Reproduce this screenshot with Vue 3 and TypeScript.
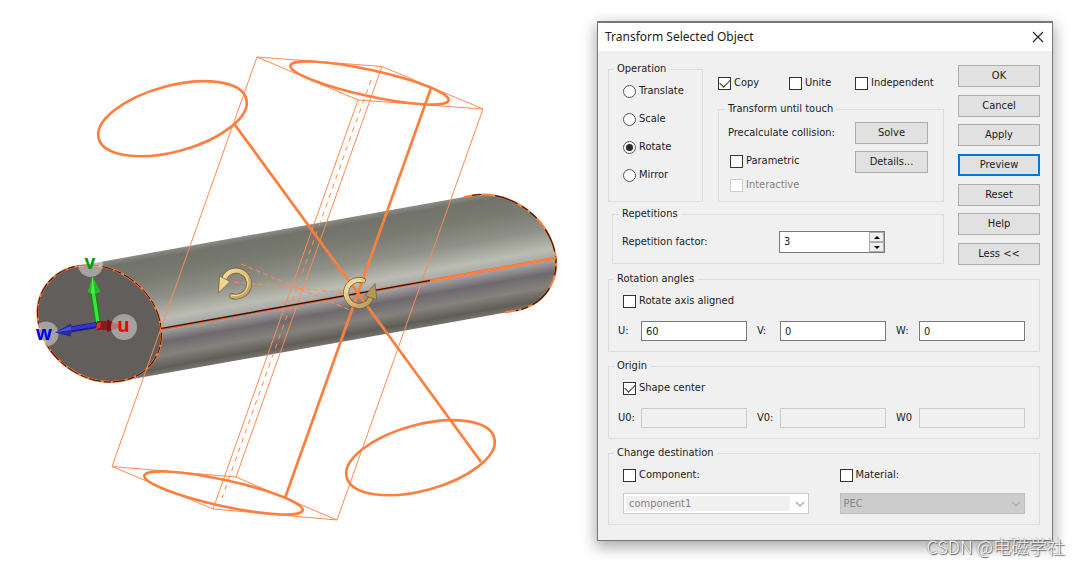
<script setup lang="ts">
import { ref } from 'vue'

const operations = ['Translate', 'Scale', 'Rotate', 'Mirror']
const operation = ref('Rotate')
const actions = ['OK', 'Cancel', 'Apply', 'Preview', 'Reset', 'Help', 'Less <<']
const copy = ref(true)
const unite = ref(false)
const independent = ref(false)
const parametric = ref(false)
const repetitions = ref('3')
const axisAligned = ref(false)
const angles = ref([
  { label: 'U:', value: '60' },
  { label: 'V:', value: '0' },
  { label: 'W:', value: '0' },
])
const origins = ['U0:', 'V0:', 'W0']
const shapeCenter = ref(true)
const useComponent = ref(false)
const useMaterial = ref(false)

function step(delta: number) {
  repetitions.value = String(Math.max(1, Number(repetitions.value) + delta))
}
</script>

<template>
  <main class="page">
    <svg class="scene" viewBox="0 0 597 564" role="img" aria-label="Cylinder with rotation preview">
      <defs>
        <linearGradient id="metal" gradientUnits="userSpaceOnUse" x1="88.9" y1="263.9" x2="110.1" y2="383.1">
          <stop offset="0" stop-color="#8a8b84" />
          <stop offset="0.05" stop-color="#71726a" />
          <stop offset="0.2" stop-color="#797a70" />
          <stop offset="0.38" stop-color="#8f9188" />
          <stop offset="0.55" stop-color="#bbbdb3" />
          <stop offset="0.64" stop-color="#a5a3a5" />
          <stop offset="0.74" stop-color="#6e696c" />
          <stop offset="0.85" stop-color="#85827d" />
          <stop offset="0.95" stop-color="#5f5d56" />
          <stop offset="1" stop-color="#77756f" />
        </linearGradient>
        <linearGradient id="gold" x1="0" y1="0" x2="1" y2="1">
          <stop offset="0" stop-color="#f7e3a4" />
          <stop offset="0.5" stop-color="#d9bc77" />
          <stop offset="1" stop-color="#b5995b" />
        </linearGradient>
      </defs>

      <path d="M77.7 265.9 472.2 195.4A65.7 54.3 36 0 1 515.8 310.6L121.3 381.1Z" fill="url(#metal)" />
      <g fill="none" stroke-width="2">
        <path d="M464 196.900 472.2 195.4A65.7 54.3 36 0 1 515.8 310.6L505 312.500" stroke="#ff7f3f" />
        <path d="M472.2 195.4A65.7 54.3 36 0 1 515.8 310.6" stroke="#2c170d" stroke-width="1.2" stroke-dasharray="9 14 24 5 7 3" />
      </g>
      <ellipse cx="99.5" cy="323.5" rx="65.7" ry="54.3" transform="rotate(36 99.5 323.5)" fill="#625e5c" stroke="#ff7f3f" stroke-width="2" />
      <ellipse cx="99.5" cy="323.5" rx="65.7" ry="54.3" transform="rotate(36 99.5 323.5)" fill="none" stroke="#2c170d" stroke-width="1" stroke-dasharray="7 3 12 2" />

      <g fill="none" stroke="#ff8a52" stroke-width="1">
        <path d="M257 57 382 66.500 483 109 358 100ZM112 466.500 236 477 337 520 213 509ZM257 57 112 466.500M382 66.500 236 477M483 109 337 520M358 100 213 509" />
        <path d="M371 80 222 498" stroke-dasharray="5 5" />
        <path d="M241 264 350 310M234 282 346 293" stroke-dasharray="5 3" />
      </g>

      <path d="M161 329 556 258" stroke="#d9602c" stroke-width="2.400" />
      <path d="M161 328.500 430 280.500" stroke="#1f0d05" stroke-width="1.200" />
      <g fill="none" stroke="#ff7f3f" stroke-width="2.700">
        <path d="M430 281 556 258M234 123.500 481 462M431 88 285 498" />
        <ellipse cx="172.500" cy="118.700" rx="76.400" ry="32.900" transform="rotate(-15.100 172.500 118.700)" />
        <ellipse cx="420.500" cy="457.700" rx="76.400" ry="32.900" transform="rotate(-15.100 420.500 457.700)" />
        <ellipse cx="369.500" cy="83" rx="81" ry="13" transform="rotate(12.400 369.500 83)" />
        <ellipse cx="223.500" cy="493" rx="81" ry="13" transform="rotate(12.400 223.500 493)" />
      </g>

      <g fill="none" stroke-linecap="round">
        <path d="M232 296A13 13 0 1 0 224 279" stroke="#6f5a2c" stroke-width="5.600" />
        <path d="M232 296A13 13 0 1 0 224 279" stroke="url(#gold)" stroke-width="4.400" />
        <path d="M233 295.500A12.500 12.500 0 0 0 245 275" stroke="#f6e7b8" stroke-width="1" />
      </g>
      <path d="M218.500 293 219.500 276 230 281.500Z" fill="#f0d68e" stroke="#7b6535" stroke-width="0.800" />
      <g fill="none" stroke-linecap="round">
        <path d="M363 280.500A13 13 0 1 0 371 298" stroke="#6f5a2c" stroke-width="5.600" />
        <path d="M363 280.500A13 13 0 1 0 371 298" stroke="url(#gold)" stroke-width="4.400" />
        <path d="M361 280.500A12.500 12.500 0 0 0 347 292" stroke="#f6e7b8" stroke-width="1" />
      </g>
      <path d="M375 283.500 377 300 365 295.500Z" fill="#b4975a" stroke="#7b6535" stroke-width="0.800" />

      <g fill="#fff" fill-opacity="0.420">
        <circle cx="90.500" cy="264.500" r="12.500" />
        <circle cx="46" cy="334" r="12.500" />
      </g>
      <path d="M98 325 93 291" stroke="#168a16" stroke-width="6" />
      <path d="M98 323 93 291" stroke="#35e835" stroke-width="3.400" />
      <path d="M92.500 276 87.500 292 94 294.500 100.500 291.500Z" fill="#20bd20" />
      <path d="M92.500 276 91 293.500 95 294Z" fill="#4cf04c" />
      <path d="M97 325 70 329.500" stroke="#1b1b85" stroke-width="6" />
      <path d="M96 324.500 70 329" stroke="#3434cf" stroke-width="3.400" />
      <path d="M55 332.500 71 323.500 72 330 70.500 336.500Z" fill="#2828a2" />
      <path d="M55 332.500 71 326 71.500 330Z" fill="#4c4ce4" />
      <path d="M97 321h11v9H97Z" fill="#8b1d1d" />
      <path d="M107 319.500 123 326 107 332Z" fill="#7b1212" />
      <path d="M97 323 101 322 100 328 96 329Z" fill="#d33" />
      <circle cx="124" cy="327" r="13" fill="#fff" fill-opacity="0.420" />
      <g class="axis-label" text-anchor="middle">
        <text x="90" y="269" fill="#0a9a0a">v</text>
        <text x="44" y="340" fill="#0000f0">w</text>
        <text x="123.500" y="332" fill="#f40000">u</text>
      </g>
    </svg>

    <section class="dialog" role="dialog" aria-labelledby="dialog-title">
      <header class="titlebar">
        <h1 id="dialog-title">Transform Selected Object</h1>
        <button class="close" type="button" aria-label="Close">
          <svg viewBox="0 0 12 12"><path d="M1 1 11 11M11 1 1 11" /></svg>
        </button>
      </header>

      <form class="body" @submit.prevent>
        <div class="top">
          <div class="settings">
            <div class="modes">
              <fieldset class="operation">
                <legend>Operation</legend>
                <label v-for="name in operations" :key="name" class="choice">
                  <input v-model="operation" type="radio" name="operation" :value="name" />{{ name }}
                </label>
              </fieldset>
              <div class="options">
                <div class="flags">
                  <label class="choice"><input v-model="copy" type="checkbox" />Copy</label>
                  <label class="choice"><input v-model="unite" type="checkbox" />Unite</label>
                  <label class="choice"><input v-model="independent" type="checkbox" />Independent</label>
                </div>
                <fieldset class="touch">
                  <legend>Transform until touch</legend>
                  <div class="touch-grid">
                    <div class="touch-labels">
                      <span>Precalculate collision:</span>
                      <label class="choice"><input v-model="parametric" type="checkbox" />Parametric</label>
                      <label class="choice muted"><input type="checkbox" disabled />Interactive</label>
                    </div>
                    <div class="touch-buttons">
                      <button class="btn" type="button">Solve</button>
                      <button class="btn" type="button">Details...</button>
                    </div>
                  </div>
                </fieldset>
              </div>
            </div>
            <fieldset class="repetitions">
              <legend>Repetitions</legend>
              <div class="factor">
                <label for="factor">Repetition factor:</label>
                <div class="spinner">
                  <input id="factor" v-model="repetitions" type="text" inputmode="numeric" />
                  <div class="steps">
                    <button type="button" aria-label="Increase" @click="step(1)">
                      <svg viewBox="0 0 6 3"><path d="M0 3 3 0 6 3Z" /></svg>
                    </button>
                    <button type="button" aria-label="Decrease" @click="step(-1)">
                      <svg viewBox="0 0 6 3"><path d="M0 0 3 3 6 0Z" /></svg>
                    </button>
                  </div>
                </div>
              </div>
            </fieldset>
          </div>
          <div class="actions">
            <button v-for="a in actions" :key="a" type="button" class="btn" :class="{ primary: a === 'Preview' }">{{ a }}</button>
          </div>
        </div>

        <fieldset class="wide">
          <legend>Rotation angles</legend>
          <label class="choice"><input v-model="axisAligned" type="checkbox" />Rotate axis aligned</label>
          <div class="triple">
            <label v-for="a in angles" :key="a.label"><span>{{ a.label }}</span><input v-model="a.value" class="field" type="text" /></label>
          </div>
        </fieldset>

        <fieldset class="wide">
          <legend>Origin</legend>
          <label class="choice"><input v-model="shapeCenter" type="checkbox" />Shape center</label>
          <div class="triple">
            <label v-for="o in origins" :key="o"><span>{{ o }}</span><input class="field" type="text" disabled /></label>
          </div>
        </fieldset>

        <fieldset class="wide">
          <legend>Change destination</legend>
          <div class="targets">
            <div class="target">
              <label class="choice"><input v-model="useComponent" type="checkbox" />Component:</label>
              <div class="select editable">
                <select aria-label="Component" disabled><option>component1</option></select>
                <svg viewBox="0 0 10 6"><path d="M1 1 5 5 9 1" /></svg>
              </div>
            </div>
            <div class="target">
              <label class="choice"><input v-model="useMaterial" type="checkbox" />Material:</label>
              <div class="select">
                <select aria-label="Material" disabled><option>PEC</option></select>
                <svg viewBox="0 0 10 6"><path d="M1 1 5 5 9 1" /></svg>
              </div>
            </div>
          </div>
        </fieldset>
      </form>
    </section>
    <div class="watermark">CSDN @电磁学社</div>
  </main>
</template>

<style>
body {
  background: #fff;
}
</style>

<style scoped>
* {
  box-sizing: border-box;
}
.page {
  position: relative;
  display: grid;
  grid-template-columns: minmax(0, 1fr) 456px;
  align-items: start;
  padding-right: 27px;
  min-height: 100vh;
  overflow: hidden;
  font: 11px/16px "DejaVu Sans Condensed", Roboto, sans-serif;
  color: #1b1b1b;
}
.scene {
  display: block;
  width: 100%;
}
.axis-label {
  font: bold 19px "Noto Sans", sans-serif;
}
.dialog {
  margin-top: 21px;
  background: #f0f0f0;
  border: 1px solid #777;
  border-top-width: 2px;
  box-shadow: 0 5px 14px 1px rgba(0, 0, 0, 0.35);
}
.titlebar {
  display: flex;
  align-items: center;
  justify-content: space-between;
  height: 28px;
  padding: 0 8px 0 7px;
  background: #fff;
}
h1 {
  margin: 0;
  font: 12px/16px "Noto Sans", sans-serif;
}
.close {
  width: 12px;
  height: 12px;
  padding: 0;
  border: 0;
  background: none;
}
svg {
  display: block;
}
.close path {
  fill: none;
  stroke: #222;
  stroke-width: 1.1;
}
.body {
  display: flex;
  flex-direction: column;
  gap: 6px;
  padding: 10px 12px 15px 10px;
}
fieldset {
  min-width: 0;
  margin: 0;
  border: 1px solid #dcdcdc;
  padding: 0;
}
legend {
  margin-left: 6px;
  padding: 0 3px;
}
.operation legend,
.wide legend {
  margin-left: -9px;
}
.top {
  display: flex;
  gap: 14px;
}
.settings {
  flex: 1;
  display: flex;
  flex-direction: column;
  gap: 4px;
  padding-bottom: 1px;
}
.modes {
  display: flex;
  gap: 15px;
}
.operation {
  display: flex;
  flex: 0 0 95px;
  flex-direction: column;
  gap: 12px;
  padding: 6px 0 18px 14px;
}
.choice {
  display: flex;
  align-items: center;
  gap: 3px;
  white-space: nowrap;
}
.choice input {
  appearance: none;
  flex: none;
  display: grid;
  place-items: center;
  width: 13px;
  height: 13px;
  margin: 0;
  border: 1px solid #333;
  background: #fff;
}
.choice input[type="radio"] {
  border-color: #555;
  border-radius: 50%;
}
.choice input[type="radio"]:checked::after {
  content: "";
  width: 7px;
  height: 7px;
  border-radius: 50%;
  background: #2a2a2a;
}
.choice input[type="checkbox"]:checked::after {
  content: "";
  width: 9px;
  height: 5px;
  margin-bottom: 3px;
  border: solid #333;
  border-width: 0 0 1px 1px;
  transform: rotate(-45deg);
}
.choice input:disabled {
  border-color: #ccc;
}
.muted {
  color: #838383;
}
.options {
  flex: 1;
  display: flex;
  flex-direction: column;
  justify-content: space-between;
  padding-top: 14px;
}
.flags {
  display: grid;
  grid-template-columns: 71px 66px 1fr;
}
.touch-grid {
  display: flex;
  justify-content: space-between;
  padding: 5px 15px 8px 9px;
}
.touch-labels {
  display: flex;
  flex-direction: column;
  padding-top: 3px;
}
.touch-labels .choice {
  margin: 12px 0 0 2px;
}
.touch-labels .muted {
  margin-top: 8px;
}
.touch-buttons {
  display: flex;
  flex-direction: column;
  gap: 7px;
  width: 73px;
}
.btn {
  width: 100%;
  height: 22px;
  padding: 0;
  border: 1px solid #adadad;
  background: #e1e1e1;
  color: inherit;
  font: inherit;
}
.btn.primary {
  border: 2px solid #0078d7;
}
.repetitions {
  margin-left: 4px;
}
.factor {
  display: flex;
  align-items: center;
  justify-content: space-between;
  padding: 9px 58px 10px 9px;
}
.spinner {
  display: flex;
  width: 106px;
  height: 22px;
  border: 1px solid #7a7a7a;
  background: #fff;
}
.spinner input {
  flex: 1;
  min-width: 0;
  padding: 0 4px;
  border: 0;
  font: inherit;
  color: inherit;
}
.steps {
  display: grid;
  width: 15px;
  background: #f0f0f0;
}
.steps button {
  display: grid;
  place-items: center;
  padding: 0;
  border: 1px solid #adadad;
  background: #f0f0f0;
}
.steps svg {
  width: 6px;
  height: 3px;
}
.actions {
  display: flex;
  flex-direction: column;
  justify-content: space-between;
  width: 82px;
  padding-top: 4px;
}
.wide {
  padding: 6px 14px 10px;
}
.triple {
  display: grid;
  grid-template-columns: repeat(3, minmax(0, 1fr));
  gap: 10px;
  margin: 12px 0 0 -5px;
}
.triple label {
  display: flex;
  align-items: center;
}
.triple span {
  flex: 0 0 23px;
}
.field {
  flex: 1;
  min-width: 0;
  height: 20px;
  padding: 0 4px;
  border: 1px solid #7a7a7a;
  background: #fff;
  color: inherit;
  font: inherit;
}
.field:disabled {
  border-color: #ccc;
  background: #f0f0f0;
}
.targets {
  display: grid;
  grid-template-columns: 1fr 1fr;
  gap: 31px;
}
.target {
  display: grid;
  gap: 10px;
}
.select {
  position: relative;
  height: 21px;
  border: 1px solid #bfbfbf;
  background: #ccc;
}
.editable {
  padding: 2px 18px 2px 2px;
  border-color: #ccc;
  background: #fff;
}
.select select {
  appearance: none;
  display: block;
  width: 100%;
  height: 100%;
  padding: 0 3px;
  border: 0;
  background: transparent;
  color: #838383;
  font: inherit;
  opacity: 1;
}
.editable select {
  background: #f0f0f0;
}
.select svg {
  position: absolute;
  right: 3px;
  top: 7px;
  width: 10px;
  height: 6px;
}
.select path {
  fill: none;
  stroke: #aaa;
  stroke-width: 1.3;
}
.watermark {
  position: absolute;
  right: 15px;
  bottom: 6px;
  font: 300 18px/24px "Noto Sans CJK SC", sans-serif;
  color: #f4f4f4;
  text-shadow: 1px 1px 1px #555, -1px -1px 1px #aaa;
  white-space: nowrap;
}
</style>
